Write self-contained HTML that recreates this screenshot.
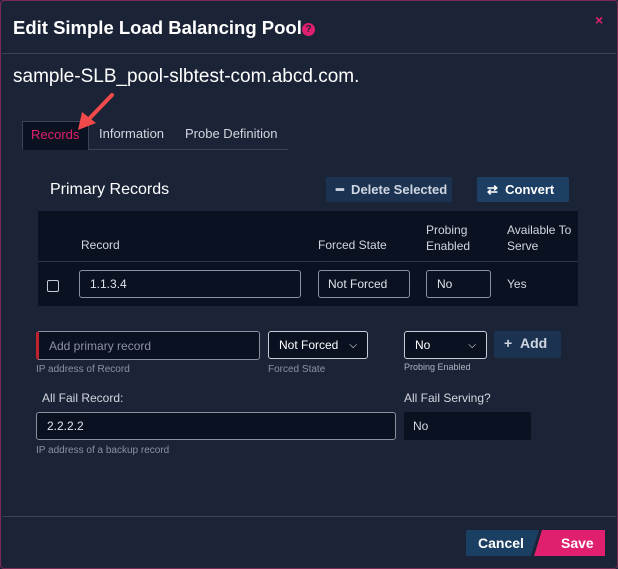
<!DOCTYPE html>
<html><head><meta charset="utf-8"><style>
*{margin:0;padding:0;box-sizing:border-box}
body{width:618px;height:569px;background:#1b2336;font-family:"Liberation Sans",sans-serif;position:relative;overflow:hidden;color:#e6e8ee}
.a{position:absolute;white-space:nowrap}
.dark{background:#0a1121}
.inp{position:absolute;background:#0a1121;border:1px solid #8a90a0;border-radius:3px;font-size:12px;color:#dfe2ea;padding-left:10px;display:flex;align-items:center}
.s{font-size:12px;color:#d3d6de}
.h{font-size:10px;color:#8c92a2}
</style></head><body>
<div class="a" style="left:0;top:0;width:618px;height:569px;border:1px solid #7a2a55;border-radius:4px"></div>
<div class="a" style="left:13px;top:17px;font-size:18.5px;font-weight:bold;color:#fff">Edit Simple Load Balancing Pool</div>
<div class="a" style="left:302px;top:23px;width:13px;height:13px;border-radius:50%;background:#e0206f;color:#1b2336;font-size:10px;font-weight:bold;text-align:center;line-height:13px">?</div>
<div class="a" style="left:595px;top:12px;color:#e0206f;font-size:14px;font-weight:bold">×</div>
<div class="a" style="left:2px;top:53px;width:614px;height:1px;background:#3a4256"></div>
<div class="a" style="left:13px;top:66px;font-size:19px;color:#fff">sample-SLB_pool-slbtest-com.abcd.com.</div>
<div class="a dark" style="left:22px;top:121px;width:67px;height:29px;border:1px solid #3a4256;border-bottom:none"></div>
<div class="a" style="left:89px;top:149px;width:199px;height:1px;background:#3a4256"></div>
<div class="a" style="left:31px;top:127px;font-size:13px;color:#e0206f">Records</div>
<div class="a s" style="left:99px;top:126px;font-size:13px">Information</div>
<div class="a s" style="left:185px;top:126px;font-size:13px">Probe Definition</div>
<svg class="a" style="left:70px;top:88px" width="50" height="50"><line x1="42" y1="7" x2="17" y2="33" stroke="#f04a4a" stroke-width="4" stroke-linecap="round"/><polygon points="8,42 12,24 26,35" fill="#f04a4a"/></svg>
<div class="a" style="left:50px;top:181px;font-size:16px;color:#fff">Primary Records</div>
<div class="a" style="left:326px;top:177px;width:126px;height:25px;background:#1b3350;border-radius:2px;font-size:13px;font-weight:bold;color:#cfd6e2;line-height:25px;padding-left:10px">━&nbsp;&nbsp;Delete Selected</div>
<div class="a" style="left:477px;top:177px;width:92px;height:25px;background:#1d3f63;border-radius:2px;font-size:13px;font-weight:bold;color:#fff;line-height:25px;padding-left:10px">⇄&nbsp;&nbsp;Convert</div>
<div class="a dark" style="left:38px;top:211px;width:540px;height:95px"></div>
<div class="a" style="left:38px;top:261px;width:540px;height:1px;background:#2e3547"></div>
<div class="a s" style="left:81px;top:238px">Record</div>
<div class="a s" style="left:318px;top:238px">Forced State</div>
<div class="a s" style="left:426px;top:222px;line-height:16px">Probing<br>Enabled</div>
<div class="a s" style="left:507px;top:222px;line-height:16px">Available To<br>Serve</div>
<div class="a" style="left:47px;top:280px;width:12px;height:12px;border:1.5px solid #c8ccd6;border-radius:2px"></div>
<div class="inp" style="left:79px;top:270px;width:222px;height:28px">1.1.3.4</div>
<div class="inp" style="left:318px;top:270px;width:92px;height:28px;padding-left:9px">Not Forced</div>
<div class="inp" style="left:426px;top:270px;width:65px;height:28px">No</div>
<div class="a s" style="left:507px;top:277px">Yes</div>
<div class="inp" style="left:36px;top:331px;width:224px;height:29px;border-left:3px solid #c0232f;color:#8c92a2">Add primary record</div>
<div class="inp" style="left:268px;top:331px;width:100px;height:28px;border-color:#c8ccd6;color:#fff">Not Forced<span style="position:absolute;right:10px;font-size:10px">⌵</span></div>
<div class="inp" style="left:404px;top:331px;width:83px;height:28px;border-color:#c8ccd6;color:#fff">No<span style="position:absolute;right:10px;font-size:10px">⌵</span></div>
<div class="a" style="left:494px;top:331px;width:67px;height:27px;background:#1b3350;border-radius:2px;font-size:14px;font-weight:bold;color:#cfd6e2;line-height:25px;padding-left:10px">+&nbsp;&nbsp;Add</div>
<div class="a h" style="left:36px;top:364px">IP address of Record</div>
<div class="a h" style="left:268px;top:364px">Forced State</div>
<div class="a h" style="left:404px;top:362px;font-size:9px;color:#aeb3c0">Probing Enabled</div>
<div class="a s" style="left:42px;top:391px">All Fail Record:</div>
<div class="a s" style="left:404px;top:391px">All Fail Serving?</div>
<div class="inp" style="left:36px;top:412px;width:360px;height:28px">2.2.2.2</div>
<div class="a dark s" style="left:404px;top:412px;width:127px;height:28px;line-height:28px;padding-left:9px;border-radius:2px">No</div>
<div class="a h" style="left:36px;top:445px">IP address of a backup record</div>
<div class="a" style="left:2px;top:516px;width:614px;height:1px;background:#3a4256"></div>
<svg class="a" style="left:466px;top:530px" width="139" height="26"><polygon points="0,0 73,0 65,26 0,26" fill="#1b3f63"/><polygon points="76,0 139,0 139,26 68,26" fill="#e0206f"/><text x="12" y="18" font-family="Liberation Sans" font-weight="bold" font-size="14" fill="#fff">Cancel</text><text x="95" y="18" font-family="Liberation Sans" font-weight="bold" font-size="14" fill="#fff">Save</text></svg>
</body></html>
